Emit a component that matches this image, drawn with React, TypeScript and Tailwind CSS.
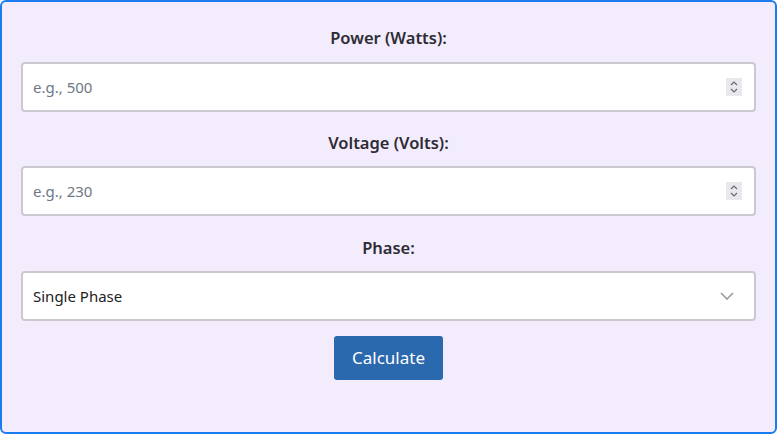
import React from 'react'

function Spinner() {
  return (
    <div className="flex h-[18px] w-[16px] flex-col items-center justify-center bg-[#e9e9ed]">
      <svg width="10" height="14" viewBox="0 0 10 14" fill="none" stroke="#6b6b6b" strokeWidth="1.2">
        <path d="M2 5 L5 2 L8 5" />
        <path d="M2 9 L5 12 L8 9" />
      </svg>
    </div>
  )
}

function NumberField({ placeholder }: { placeholder: string }) {
  return (
    <div className="flex h-[50px] w-full items-center rounded-[4px] border-2 border-[#cbc8cf] bg-white pl-[10px] pr-[12px]">
      <input
        type="text"
        placeholder={placeholder}
        className="flex-1 bg-transparent text-[15px] text-[#333] outline-none placeholder:text-[#6e7884]"
      />
      <Spinner />
    </div>
  )
}

export default function App() {
  return (
    <div className="h-[434px] w-[777px] font-['Noto_Sans','Open_Sans',sans-serif]">
      <div className="flex h-full w-full flex-col items-center rounded-[6px] border-2 border-[#1a7cf0] bg-[#f3ecfd] px-[19px] pt-[25px]">
        <label className="mb-[13px] text-[16.5px] font-semibold leading-[22px] text-[#2d2b33]">Power (Watts):</label>
        <NumberField placeholder="e.g., 500" />

        <label className="mb-[12px] mt-[20px] text-[16.5px] font-semibold leading-[22px] text-[#2d2b33]">Voltage (Volts):</label>
        <NumberField placeholder="e.g., 230" />

        <label className="mb-[12px] mt-[21px] text-[16.5px] font-semibold leading-[22px] text-[#2d2b33]">Phase:</label>
        <div className="flex h-[50px] w-full items-center justify-between rounded-[4px] border-2 border-[#cbc8cf] bg-white pl-[10px] pr-[20px]">
          <span className="text-[15px] text-[#222]">Single Phase</span>
          <svg width="14" height="8" viewBox="0 0 14 8" fill="none" stroke="#9a9a9a" strokeWidth="1.6">
            <path d="M1 1 L7 7 L13 1" />
          </svg>
        </div>

        <button className="mt-[15px] h-[44px] w-[109px] rounded-[3px] bg-[#2a69ad] text-[17px] text-white">
          Calculate
        </button>
      </div>
    </div>
  )
}
